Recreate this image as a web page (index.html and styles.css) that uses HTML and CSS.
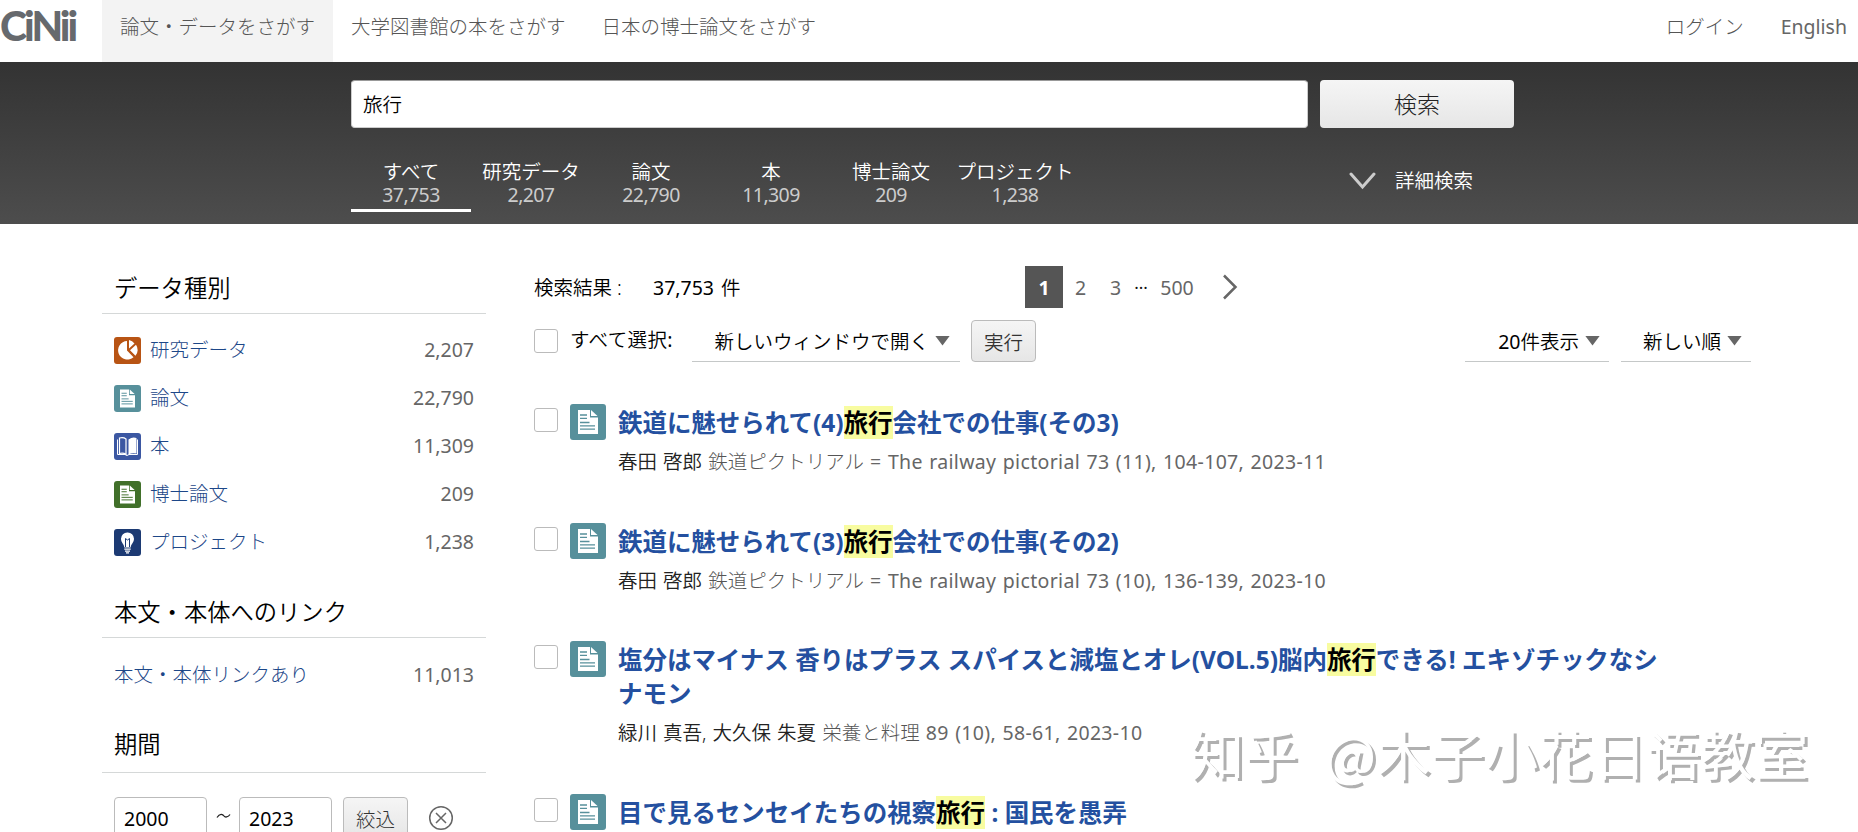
FILE: index.html
```html
<!DOCTYPE html>
<html lang="ja">
<head>
    <meta charset="UTF-8">
    <meta name="viewport" content="width=device-width, initial-scale=1.0">
    <title>旅行 - CiNii Research</title>
    <link rel="stylesheet" href="styles.css">
</head>
<body>
    <!-- shared icons -->
    <svg class="sprite" width="0" height="0">
        <symbol id="icon-doc" viewBox="0 0 36 36">
            <path d="M8 6h12v7.500h8V30H8z" fill="#fff"/>
            <path d="M21 6l6.500 6H21z" fill="#fff"/>
            <path d="M10 11h7M10 14.300h7M10 18.500h9.500M10 21.800h15M10 25.200h15" stroke="currentColor" stroke-width="1.300" fill="none"/>
        </symbol>
    </svg>

    <header class="header">
        <a class="logo" href="#">CiNii</a>
        <nav class="nav">
            <a class="nav-item active" href="#">論文・データをさがす</a>
            <a class="nav-item" href="#">大学図書館の本をさがす</a>
            <a class="nav-item" href="#">日本の博士論文をさがす</a>
        </nav>
        <div class="user-nav">
            <a href="#">ログイン</a>
            <a class="en" href="#">English</a>
        </div>
    </header>

    <section class="search">
        <div class="search-row">
            <input class="search-input" type="text" value="旅行">
            <button class="search-btn">検索</button>
        </div>
        <div class="search-sub">
            <ul class="tabs">
                <li class="tab active">すべて<span>37,753</span></li>
                <li class="tab">研究データ<span>2,207</span></li>
                <li class="tab">論文<span>22,790</span></li>
                <li class="tab">本<span>11,309</span></li>
                <li class="tab">博士論文<span>209</span></li>
                <li class="tab wide">プロジェクト<span>1,238</span></li>
            </ul>
            <a class="detail" href="#">
                <svg width="28" height="18" viewBox="0 0 28 18"><path d="M2 2l11.500 13L25 2" fill="none" stroke="#ccc" stroke-width="3" stroke-linecap="round"/></svg>
                詳細検索
            </a>
        </div>
    </section>

    <main class="main">
        <aside class="sidebar">
            <h2 class="side-title">データ種別</h2>
            <ul class="side-list">
                <li>
                    <svg class="type-icon data" viewBox="0 0 27 27"><path d="M13 4v9.500l6.500 6.800A9.300 9.300 0 1 1 13 4z" fill="#fff"/><path d="M15 3v8.500l5.500-5A9 9 0 0 0 15 3zM22 7.700l-6 5.600 5.500 5.500A9 9 0 0 0 22 7.700z" fill="#fff"/></svg>
                    <a href="#">研究データ</a><span class="count">2,207</span>
                </li>
                <li>
                    <svg class="type-icon article"><use href="#icon-doc"/></svg>
                    <a href="#">論文</a><span class="count">22,790</span>
                </li>
                <li>
                    <svg class="type-icon book" viewBox="0 0 27 27"><path d="M3.500 6.500v15h7.500l2 1 2-1h8.500v-15" fill="none" stroke="#fff" stroke-width="1"/><path d="M14.500 6.500q4-3 8-1.500v15.500q-4.500-1-8 1z" fill="#fff"/><path d="M5.500 20.500V5q4-1 6.500 1v15.500q-2.500-2-6.500-1z" fill="none" stroke="#fff" stroke-width="1.200"/></svg>
                    <a href="#">本</a><span class="count">11,309</span>
                </li>
                <li>
                    <svg class="type-icon thesis"><use href="#icon-doc"/></svg>
                    <a href="#">博士論文</a><span class="count">209</span>
                </li>
                <li>
                    <svg class="type-icon project" viewBox="0 0 27 27"><path d="M13.500 3.500a6.300 6.300 0 0 1 6.500 6.300c0 4-3 5-3.300 8.700h-6.400C10 14.800 7 13.800 7 9.800a6.300 6.300 0 0 1 6.500-6.300z" fill="#fff"/><path d="M11.500 18V9.500l2 1.500 2-1.500V18" fill="none" stroke="#1c3a73" stroke-width="1"/><path d="M10.300 20.200h6.400M11 22.200h5M12 23.800h3" stroke="#fff" stroke-width="1.300"/></svg>
                    <a href="#">プロジェクト</a><span class="count">1,238</span>
                </li>
            </ul>

            <h2 class="side-title">本文・本体へのリンク</h2>
            <ul class="side-list link-list">
                <li><a href="#">本文・本体リンクあり</a><span class="count">11,013</span></li>
            </ul>

            <h2 class="side-title period-title">期間</h2>
            <div class="period">
                <input class="year" type="text" value="2000">
                <svg class="tilde" width="15" height="6" viewBox="0 0 15 6"><path d="M1 4.500C4-.5 7 1.500 8 3s4 1.500 6-1.500" fill="none" stroke="#222" stroke-width="1.300"/></svg>
                <input class="year" type="text" value="2023">
                <button class="btn">絞込</button>
                <svg class="clear" width="26" height="26" viewBox="0 0 26 26"><path d="M8 8l10 10M18 8L8 18" stroke="#666" stroke-width="1.500"/><circle cx="13" cy="13" r="11.300" fill="none" stroke="#666" stroke-width="1.500"/></svg>
            </div>
        </aside>

        <div class="results">
            <div class="result-head">
                <span class="hit-label">検索結果 :</span>
                <span class="hit-count"><span class="en">37,753</span> 件</span>
                <div class="pager">
                    <span class="page current">1</span>
                    <a class="page" href="#">2</a>
                    <a class="page" href="#">3</a>
                    <span class="dots">...</span>
                    <a class="page last" href="#">500</a>
                    <svg width="16" height="26" viewBox="0 0 16 26"><path d="M2 1.500l11.500 11.500L2 24.500" fill="none" stroke="#666" stroke-width="2.500"/></svg>
                </div>
            </div>

            <div class="toolbar">
                <span class="check"></span>
                <span class="check-label">すべて選択<span class="en">:</span></span>
                <span class="select action">新しいウィンドウで開く<i class="caret"></i></span>
                <button class="btn">実行</button>
                <span class="select per-page"><span class="en">20</span>件表示<i class="caret"></i></span>
                <span class="select order">新しい順<i class="caret"></i></span>
            </div>

            <div class="item">
                <span class="check"></span>
                <svg class="item-icon"><use href="#icon-doc"/></svg>
                <div class="item-body">
                    <a class="item-title" href="#">鉄道に魅せられて(4)<mark>旅行</mark>会社での仕事(その3)</a>
                    <p class="item-info"><b>春田 啓郎</b> 鉄道ピクトリアル <span class="en">= The railway pictorial 73 (11), 104-107, 2023-11</span></p>
                </div>
            </div>
            <div class="item">
                <span class="check"></span>
                <svg class="item-icon"><use href="#icon-doc"/></svg>
                <div class="item-body">
                    <a class="item-title" href="#">鉄道に魅せられて(3)<mark>旅行</mark>会社での仕事(その2)</a>
                    <p class="item-info"><b>春田 啓郎</b> 鉄道ピクトリアル <span class="en">= The railway pictorial 73 (10), 136-139, 2023-10</span></p>
                </div>
            </div>
            <div class="item">
                <span class="check"></span>
                <svg class="item-icon"><use href="#icon-doc"/></svg>
                <div class="item-body">
                    <a class="item-title" href="#">塩分はマイナス 香りはプラス スパイスと減塩とオレ(VOL.5)脳内<mark>旅行</mark>できる! エキゾチックなシ<br>ナモン</a>
                    <p class="item-info"><b>緑川 真吾, 大久保 朱夏</b> 栄養と料理 <span class="en">89 (10), 58-61, 2023-10</span></p>
                </div>
            </div>
            <div class="item">
                <span class="check"></span>
                <svg class="item-icon"><use href="#icon-doc"/></svg>
                <div class="item-body">
                    <a class="item-title" href="#">目で見るセンセイたちの視察<mark>旅行</mark> : 国民を愚弄</a>
                </div>
            </div>
        </div>
    </main>

    <div class="watermark">知乎 @木子小花日语教室</div>
</body>
</html>
```
FILE: styles.css
```css
* {
    box-sizing: border-box;
}

body {
    margin: 0;
    height: 832px;
    overflow: hidden;
    background: #fff;
    color: #000;
    font-family: "Noto Sans", "Noto Sans CJK JP", sans-serif;
    font-size: 19.5px;
    line-height: 28px;
    font-weight: 300;
}

a {
    color: inherit;
    text-decoration: none;
}

ul {
    list-style: none;
    margin: 0;
    padding: 0;
}

input,
button {
    font: inherit;
}

.sprite {
    position: absolute;
}

.en {
    font-weight: 400;
}

/* header */
.header {
    display: flex;
    height: 62px;
    color: #555;
}

.logo {
    width: 102px;
    padding-top: 5px;
    font-family: Lato, sans-serif;
    font-size: 41px;
    line-height: 42px;
    font-weight: 900;
    letter-spacing: -3px;
    color: #66696d;
}

.nav {
    display: flex;
}

.nav-item {
    padding: 13px 18px 0;
}

.nav-item.active {
    background: #f3f3f3;
}

.user-nav {
    display: flex;
    gap: 37px;
    margin-left: auto;
    padding: 13px 11px 0 0;
}

.user-nav .en {
    color: #666;
}

/* search area */
.search {
    height: 162px;
    padding: 18px 0 0 351px;
    background: linear-gradient(#333, #4d4d4d);
}

.search-row {
    display: flex;
    gap: 12px;
}

.search-input {
    width: 957px;
    height: 48px;
    padding: 0 11px 1px;
    border: 1px solid #ccc;
    border-top-color: #999;
    border-radius: 4px;
    background: #fff;
    color: #000;
    font-weight: 350;
}

.search-btn {
    width: 194px;
    height: 48px;
    border: 0;
    border-radius: 4px;
    background: linear-gradient(#f5f5f5, #e6e6e6);
    color: #222;
    font-size: 23px;
}

.search-sub {
    display: flex;
    width: 1163px;
}

.tabs {
    display: flex;
    margin-top: 30px;
    color: #fff;
    font-weight: 350;
}

.tab {
    width: 120px;
    height: 54px;
    padding-top: 3px;
    text-align: center;
    line-height: 22px;
    white-space: nowrap;
}

.tab.wide {
    width: 128px;
}

.tab.active {
    border-bottom: 3px solid #fff;
}

.tab span {
    display: block;
    line-height: 24px;
    color: #ccc;
    font-weight: 400;
    letter-spacing: -0.6px;
}

.detail {
    display: flex;
    align-items: center;
    gap: 18px;
    height: 28px;
    margin: 39px 41px 0 auto;
    color: #fff;
    font-weight: 350;
}

/* main columns */
.main {
    display: flex;
    padding-left: 102px;
}

.sidebar {
    width: 384px;
    margin-right: 48px;
    padding-top: 47px;
}

.side-title {
    height: 43px;
    margin: 0;
    padding-left: 12px;
    border-bottom: 1px solid #d5d8d8;
    font-size: 23.300px;
    line-height: 34px;
    font-weight: 350;
}

.side-title.period-title {
    height: 46px;
}

.side-list {
    padding: 12px 12px 0 12px;
    height: 281px;
}

.side-list li {
    display: flex;
    align-items: center;
    height: 48px;
    color: #1d4788;
}

.side-list.link-list {
    height: 89px;
    padding-top: 13px;
}

.count {
    margin-left: auto;
    color: #666;
    font-weight: 400;
}

.type-icon {
    width: 27px;
    height: 27px;
    margin-right: 9px;
    border-radius: 3px;
    color: #57909b;
    background: #57909b;
}

.type-icon.data {
    background: #b85414;
}

.type-icon.book {
    background: #3b57a2;
}

.type-icon.thesis {
    color: #41702a;
    background: #41702a;
}

.type-icon.project {
    background: #1c3a73;
}

.period {
    display: flex;
    align-items: center;
    padding: 24px 0 0 12px;
}

.year {
    width: 93px;
    height: 42px;
    padding: 0 9px;
    border: 1px solid #bbb;
    border-radius: 4px;
    color: #000;
    font-weight: 400;
}

.tilde {
    margin: 0 8px 4px 9px;
}

.btn {
    width: 65px;
    height: 42px;
    padding: 3px 0 0;
    border: 1px solid #bbb;
    border-radius: 4px;
    background: linear-gradient(#f5f5f5, #e6e6e6);
    color: #333;
}

.period .btn {
    margin: 0 20px 0 11px;
}

/* results */
.results {
    width: 1217px;
    padding-top: 42px;
}

.result-head {
    display: flex;
    align-items: center;
    height: 42px;
    padding-top: 1px;
    font-weight: 350;
}

.hit-label {
    width: 119px;
}

.hit-count {
    width: 372px;
    word-spacing: 2px;
    white-space: nowrap;
}

.pager {
    display: flex;
    align-items: center;
    margin-top: -1px;
    color: #666;
    font-weight: 400;
}

.page {
    width: 35px;
    padding-top: 1px;
    text-align: center;
}

.page.current {
    width: 38px;
    height: 42px;
    line-height: 42px;
    background: #555;
    color: #fff;
    font-weight: 700;
}

.dots {
    width: 16px;
    height: 32px;
    line-height: 24px;
    color: #111;
    font-size: 17px;
    text-align: center;
}

.page.last {
    width: 56px;
    margin-right: 17px;
}

.toolbar {
    display: flex;
    height: 42px;
    margin-top: 12px;
    font-weight: 350;
}

.check {
    flex: none;
    width: 24px;
    height: 24px;
    border: 1px solid #bbb;
    border-radius: 3px;
    background: #fff;
}

.toolbar .check {
    margin-top: 9px;
}

.check-label {
    width: 134px;
    padding: 6px 0 0 12px;
    letter-spacing: 0.4px;
    white-space: nowrap;
}

.select {
    display: flex;
    align-items: center;
    justify-content: flex-end;
    padding: 2px 9px 0 0;
    border-bottom: 1px solid #c5c8c8;
    white-space: nowrap;
}

.action {
    width: 268px;
    padding-right: 10px;
    margin-right: 11px;
}

.per-page {
    width: 144px;
    margin-left: auto;
    margin-right: 12px;
}

.order {
    width: 130px;
}

.caret {
    width: 15px;
    height: 10px;
    margin: 0 0 2px 6px;
    background: #666;
    clip-path: polygon(0 0, 100% 0, 50% 100%);
}

.item {
    display: flex;
    margin-top: 42px;
}

.item + .item {
    margin-top: 46.500px;
}

.item .check {
    margin-top: 4px;
}

.item-icon {
    flex: none;
    width: 36px;
    height: 36px;
    margin: 0 12px;
    border-radius: 3px;
    color: #57909b;
    background: #57909b;
}

.item-title {
    display: block;
    padding-top: 2px;
    color: #2450a0;
    font-size: 24.480px;
    line-height: 34px;
    font-weight: 700;
    white-space: nowrap;
}

.item-title mark {
    padding: 0;
    background: #f8fca0;
    color: #000;
}

.item-info {
    margin: 8px 0 0;
    line-height: 28px;
    color: #555;
    word-spacing: 1px;
    white-space: nowrap;
}

.item-info .en {
    color: #666;
    letter-spacing: 0.33px;
}

.item-info b {
    color: #222;
    font-weight: 350;
}

.watermark {
    position: absolute;
    left: 1190px;
    top: 714px;
    font-family: "Noto Sans CJK SC", sans-serif;
    font-size: 54px;
    line-height: 78px;
    font-weight: 400;
    word-spacing: 15px;
    color: #fff;
    text-shadow: 3px 3px 0 #b0b0b0;
    white-space: nowrap;
}
```
